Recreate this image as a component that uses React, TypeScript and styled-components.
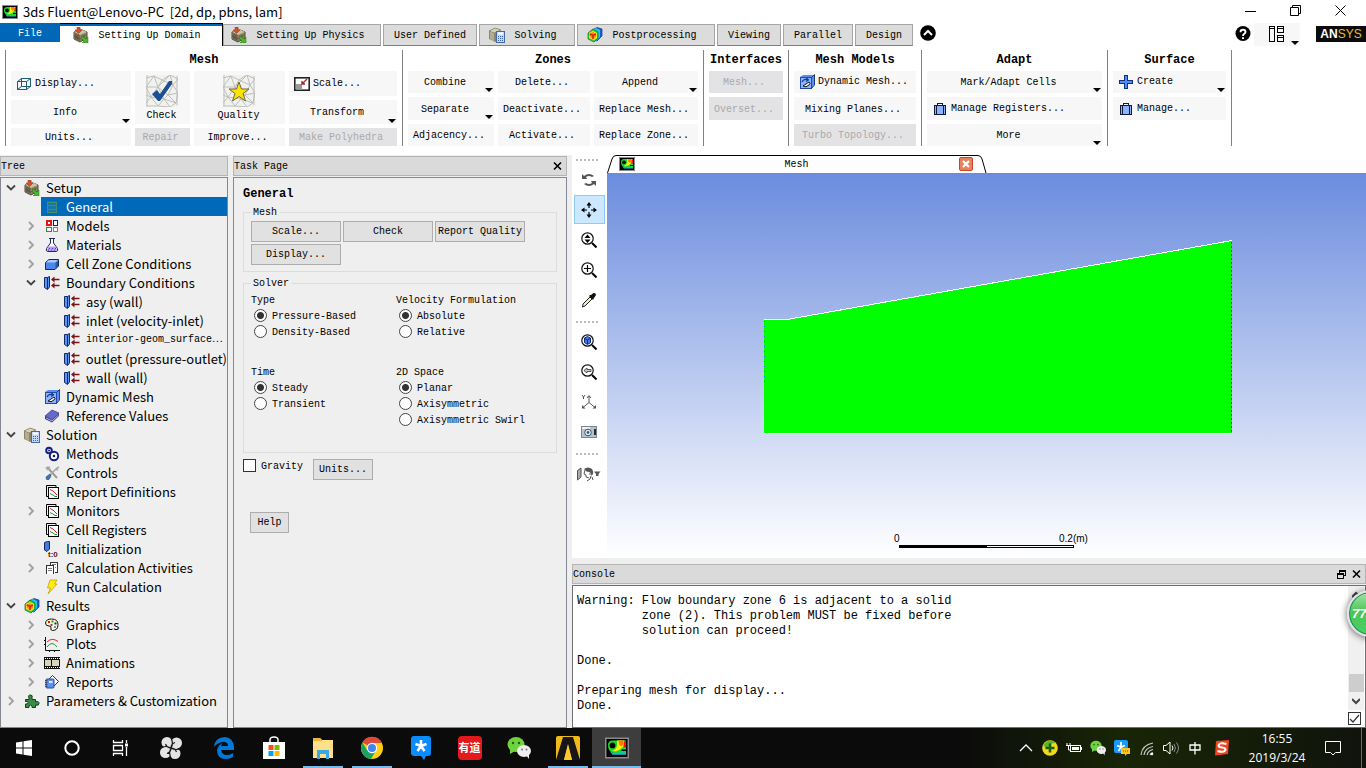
import React from "react";
import styled, { createGlobalStyle, css } from "styled-components";

const mono = `"Liberation Mono", "Noto Sans CJK SC", monospace`;
const sans = `"Noto Sans CJK SC", "Open Sans", sans-serif`;

const GlobalStyle = createGlobalStyle`
  * { box-sizing: border-box; }
  body { margin: 0; background: #efefef; color: #000; font: 10px/16px ${mono}; }
  button, input { font: inherit; color: inherit; margin: 0; padding: 0; }
  button { border: 0; background: none; }
  svg { display: block; flex: none; }
  ul { list-style: none; margin: 0; padding: 0; }
`;

/* ---------- icons ---------- */

type IconProps = { size?: number };

const Svg = ({ size = 16, box = 16, crisp = false, children }: {
  size?: number; box?: number; crisp?: boolean; children: React.ReactNode;
}) => (
  <svg width={size} height={size} viewBox={`0 0 ${box} ${box}`} fill="none" aria-hidden="true"
    shapeRendering={crisp ? "crispEdges" : undefined}>
    {children}
  </svg>
);

const FluentIcon = ({ size = 16 }: IconProps) => (
  <Svg size={size}>
    <rect x="0.5" y="1.5" width="15" height="13" fill="#000" stroke="#8a8a8a" />
    <path d="M2 6Q2 3 5 3H14V9H11V10H14V11.500Q9 13 5 11Q2 10 2 6Z" fill="#19d92b" />
    <path d="M3 10Q6 12 9 11H14V12.500H5Z" fill="#13b9e6" />
    <path d="M8 3H13V5Q12 8 9 9.500Q6 11 5 9.500Q8 9 8 6Z" fill="#fff000" />
    <path d="M9 3H12Q13 5 11 7L9.500 6Z" fill="#ff7a00" />
    <path d="M12.500 3.500H14V7.500H12.500Z" fill="#e11" />
    <circle cx="5" cy="6.300" r="1.900" fill="#000" />
  </Svg>
);

const SetupIcon = ({ size = 16 }: IconProps) => (
  <Svg size={size}>
    <path d="M1 5L7 2L14 5V11L7 15L1 12Z" fill="#8f866b" stroke="#4e4735" />
    <path d="M1 5L7 8L14 5L8 2Z" fill="#c9c0a2" />
    <path d="M7 8V15L1 12V5Z" fill="#766d53" />
    <path d="M3 7V12M5 8V13M9 8V13M11 7V12M1 9L7 12L13 8" stroke="#4e4735" strokeWidth=".6" />
    <path d="M4 0H7V3H9L5.500 6.500L2 3H4Z" fill="#d4512b" stroke="#86311b" strokeWidth=".5" />
    <path d="M9 9L13 12L15 10V16H9L11 14L8 11Z" fill="#4eb52c" stroke="#257012" strokeWidth=".5" />
  </Svg>
);

const SolutionIcon = ({ size = 16 }: IconProps) => (
  <Svg size={size}>
    <path d="M0 4L6 1L11 2.500V13L6 15L0 12Z" fill="#8c8569" />
    <path d="M0 4L6 1L12 3L5 6Z" fill="#d6d0b5" stroke="#7b7458" strokeWidth=".6" />
    <path d="M2 5V12.500M4 6V14" stroke="#d9d3b9" />
    <rect x="7.500" y="4.500" width="8" height="11" fill="#c5d8f8" stroke="#4568a6" />
    <path d="M9 6.500H14" stroke="#fff" strokeWidth="2" />
    <path d="M9 9.500H14M9 11.500H14M9 13.500H14" stroke="#3c64b2" strokeDasharray="1 1" />
  </Svg>
);

const ResultsIcon = ({ size = 16 }: IconProps) => (
  <Svg size={size}>
    <path d="M5 3L10 .5L15 2V9L10 14L5 13Z" fill="#2058dd" stroke="#173a80" strokeWidth=".7" />
    <path d="M4 4L9 1L13 3V10L9 14Z" fill="#17cfe0" />
    <path d="M1 6L6 2L11 5V11L7 15L1 12Z" fill="#38cf2f" stroke="#176d20" strokeWidth=".7" />
    <path d="M2 6L6 4L10 6V11L7 13L2 11Z" fill="#ffe71b" />
    <path d="M2 7L6 5L9 7V10L6 12L3 10Z" fill="#ff8a19" />
    <path d="M3 7L6 8.500L9 7M6 8V12" stroke="#d9240b" strokeWidth="1.500" />
  </Svg>
);

const WireCubeIcon = () => (
  <Svg>
    <path d="M1.500 5.500H10.500V13.500H1.500ZM5.500 2.500H14.500V10.500H5.500ZM1.500 5.500L5.500 2.500M10.500 5.500L14.500 2.500M10.500 13.500L14.500 10.500M1.500 13.500L5.500 10.500" stroke="#1d5a74" />
  </Svg>
);

const ScaleIcon = () => (
  <Svg>
    <rect x=".8" y="1.800" width="14.400" height="12.400" fill="#fff" stroke="#222" strokeWidth="1.600" />
    <rect x="2" y="8" width="6" height="5.500" fill="#999" />
    <path d="M13 3L8 8M8 5V8H11" stroke="#a8262b" strokeWidth="1.400" />
  </Svg>
);

const MeshBackdrop = () => (
  <>
    <rect width="32" height="32" fill="#f1f1ef" />
    <path d="M0 3L8 1L16 5L24 0L32 4M0 12L8 1L12 12L24 0L27 10L32 4M0 12L12 12L16 5L27 10L32 18L22 20L12 12L5 22L0 12M0 28L5 22L12 31L18 24L5 22M12 12L18 24L22 20L27 10M22 20L30 28L18 24L24 32M32 18L30 28M0 31L12 31L24 32L30 28M1 0V31M31 1V30M0 20L5 22" stroke="#bfbfba" />
  </>
);

const CheckIcon = () => (
  <Svg size={32} box={32}>
    <MeshBackdrop />
    <path d="M6 19L11 15L14 19L23 6H26V9L14 26H12Z" fill="#1c4f94" />
  </Svg>
);

const QualityIcon = () => (
  <Svg size={32} box={32}>
    <MeshBackdrop />
    <path d="M16 7L18.500 14H26L20 18.500L22.500 26L16 21.500L9.500 26L12 18.500L6 14H13.500Z" fill="#ffe300" stroke="#6b6740" />
  </Svg>
);

const DynamicMeshIcon = () => (
  <Svg>
    <path d="M1 3L4 1H15V11L13 14H1Z" fill="#5b8cf0" />
    <rect x="1.500" y="3.500" width="11" height="11" fill="#8db3ff" stroke="#1f4ba6" />
    <path d="M12.500 3.500L15.500 .5V11L12.500 14.500" stroke="#1f3d80" />
    <path d="M3 8Q5 4 9 6M7.500 4L9.500 6L7 7.500" stroke="#123a8c" strokeWidth="1.200" />
    <path d="M4 12L10 8Q12 9 10 11Q7 14 4 12Z" fill="#fff" stroke="#111" />
  </Svg>
);

const CaseIcon = () => (
  <Svg crisp>
    <path d="M5.500 4V2.500H10.500V4" stroke="#111a3c" />
    <rect x="2.500" y="4.500" width="11" height="9" fill="#8fb2ff" stroke="#111a3c" />
    <path d="M4.500 5V13M11.500 5V13" stroke="#111a3c" />
  </Svg>
);

const PlusIcon = () => (
  <Svg crisp>
    <path d="M6.500 1.500H9.500V6.500H14.500V9.500H9.500V14.500H6.500V9.500H1.500V6.500H6.500Z" fill="#4d8dff" stroke="#123177" />
  </Svg>
);

const GeneralIcon = () => (
  <Svg crisp>
    <path d="M3 2H13V14H3Z" fill="#1977a6" />
    <path d="M3 3H13M3 6.500H13M3 10H13M3 13.500H13M3.500 3V14M12.500 3V14" stroke="#40906e" />
  </Svg>
);

const ModelsIcon = () => (
  <Svg crisp>
    <rect x="3" y="3" width="4" height="4" stroke="#e11" strokeWidth="2" fill="#fff" />
    <rect x="9.500" y="2.500" width="4" height="5" stroke="#102080" fill="#fff" />
    <rect x="2.500" y="9.500" width="5" height="4" stroke="#2e8c46" fill="#fff" />
    <rect x="9.500" y="9.500" width="4" height="4" stroke="#4b86f5" fill="#fff" />
  </Svg>
);

const FlaskIcon = () => (
  <Svg>
    <path d="M6.500 1.500V6L2.500 11.500Q1.500 14.500 4 14.500H12Q14.500 14.500 13.500 11.500L9.500 6V1.500M5 1.500H11" fill="#fff" stroke="#222753" />
    <path d="M4.500 9.500H11.500L13 12.500Q13 14 12 14H4Q3 14 3 12.500Z" fill="#b5a0f2" />
    <path d="M5 11.500H12M4 13H12" stroke="#5a38bf" strokeDasharray="1 2" />
  </Svg>
);

const BrickIcon = () => (
  <Svg>
    <path d="M1.500 6.500L5 3.500H14.500V10L11 13.500H1.500Z" fill="#4c86e8" stroke="#152855" />
    <path d="M2 6.500L5 4H14L11 6.500Z" fill="#a6c8ff" />
    <path d="M11.500 7V13L14 10V5Z" fill="#2657ad" />
  </Svg>
);

const BoundaryIcon = () => (
  <Svg>
    <path d="M.5 2.500H3.500L5.500 1.500V12L3.500 14.500L.5 12.500Z" fill="#5d93f2" stroke="#142a63" />
    <path d="M3.500 2.500V14" stroke="#142a63" />
    <path d="M9 4.500H15.500M9 10.500H15.500" stroke="#7a1418" strokeWidth="1.400" />
    <path d="M7 4.500L10.500 1.500V7.500ZM7 10.500L10.500 7.500V13.500Z" fill="#7a1418" />
  </Svg>
);

const BookIcon = () => (
  <Svg>
    <path d="M1 8L8 2L15 5L8 12Z" fill="#6868c9" stroke="#37378d" strokeWidth=".7" />
    <path d="M1 8L8 12L15 5V8L8 14.500L1 11Z" fill="#35358a" />
    <path d="M2 10L8 13L14.500 7" stroke="#dcdcf0" strokeWidth=".8" />
  </Svg>
);

const GearsIcon = () => (
  <Svg>
    <circle cx="5" cy="4.500" r="2.800" fill="#fff" stroke="#171f80" strokeWidth="2" />
    <circle cx="5" cy="4.500" r="1" fill="#171f80" />
    <circle cx="10" cy="10" r="4.200" fill="#fff" stroke="#171f80" strokeWidth="2" />
    <circle cx="10" cy="10" r="1.300" fill="#171f80" />
  </Svg>
);

const ToolsIcon = () => (
  <Svg>
    <path d="M3 2L13 13" stroke="#9a9a9a" strokeWidth="2" />
    <path d="M1.500 2L3 5L6 4L5 1" stroke="#b0b0b0" />
    <path d="M13 3L6 10M15 2L12 4M14 5L11 4" stroke="#a8a8a8" strokeWidth="1.600" />
    <path d="M2 12L6 9L7 11L5 14.500H2.500Z" fill="#3e76b5" stroke="#28466d" strokeWidth=".6" />
  </Svg>
);

const ReportIcon = () => (
  <Svg>
    <path d="M12 3V1.500H2.500V12.500H4" stroke="#000" />
    <rect x="4.500" y="3.500" width="10" height="11" fill="#fff" stroke="#000" />
    <path d="M6 5.500L9 7L13 11" stroke="#e01c24" />
    <path d="M6 9.500L9 11L11 12.500H13" stroke="#189a3a" />
  </Svg>
);

const InitIcon = () => (
  <Svg>
    <path d="M.5 1.500L3.500 .5H5.500V8L3 10.500L.5 9Z" fill="#4579de" stroke="#142a63" />
    <text x="4" y="15.500" fontFamily="Liberation Sans" fontWeight="bold" fontSize="8" fill="#6b1417">t:0</text>
  </Svg>
);

const PagesIcon = () => (
  <Svg crisp>
    <path d="M6.500 9V2.500H13.500V12.500H11" fill="#fff" stroke="#333" />
    <path d="M2.500 14V5.500H9.500V13.500" fill="#fff" stroke="#333" />
    <path d="M4 8.500H8M4 10.500H8M8 4.500H12M11 7.500H12" stroke="#777" />
  </Svg>
);

const BoltIcon = () => (
  <Svg>
    <path d="M6 1H13L10.500 5H13L4 15L6.500 9H3.500Z" fill="#ffec10" stroke="#c7a100" strokeWidth=".8" />
  </Svg>
);

const PaletteIcon = () => (
  <Svg>
    <path d="M1.500 6Q2 2 7.500 2Q14 2 14 7.500Q14 13.500 8.500 13.500Q6 13 7 11Q7.500 9 5 9Q1.500 9 1.500 6Z" fill="#fff7c9" stroke="#111" />
    <rect x="4" y="4" width="2" height="2" fill="#e11" /><rect x="7.500" y="3.500" width="2" height="2" fill="#1c9c34" />
    <rect x="10.500" y="5.500" width="2" height="2" fill="#111a80" /><rect x="10" y="9" width="2" height="2" fill="#16b9cc" />
    <rect x="6.500" y="7" width="2" height="2" fill="#b01cb0" />
  </Svg>
);

const PlotIcon = () => (
  <Svg>
    <path d="M1.500 1V14.500H16M0 4.500H2M0 8.500H2M5.500 14V16M10.500 14V16" stroke="#111" />
    <path d="M3 6Q8 1 14 5.500" stroke="#e02020" /><path d="M3 11Q8 4 13 11" stroke="#1d9a3c" />
  </Svg>
);

const FilmIcon = () => (
  <Svg crisp>
    <rect y="2" width="16" height="12" fill="#111" />
    <path d="M1 3.500H16M1 12.500H16" stroke="#fff" strokeDasharray="1 1" />
    <rect x="1" y="5" width="6" height="6" fill="#d8d5bd" /><rect x="8" y="5" width="7" height="6" fill="#d8d5bd" />
  </Svg>
);

const ReportsIcon = () => (
  <Svg>
    <path d="M4 6L8.500 1.500L14.500 7.500L10 12" fill="#fff" stroke="#333" />
    <rect x="2" y="5" width="8" height="9" rx="1" fill="#5d93ee" stroke="#264f9e" />
    <path d="M1 6.500H3.500M1 8.500H3.500M1 10.500H3.500M1 12.500H3.500" stroke="#263c70" strokeWidth=".8" />
    <rect x="5" y="7" width="3.500" height="2" fill="#dbe8ff" />
  </Svg>
);

const PuzzleIcon = () => (
  <Svg>
    <path d="M1.500 6.500H5V5Q3.500 2 6.500 2Q9 2 8 5V6.500H11.500V9Q15 7.500 15 10.500Q15 13 11.500 12V14.500H8Q8.500 12 6.500 12Q4.500 12 5 14.500H1.500V11Q4 11.500 4 9.500Q4 8 1.500 8.500Z" fill="#3b8c48" stroke="#133f1c" />
  </Svg>
);

/* ---------- title bar and ribbon ---------- */

const Page = styled.div`
  display: flex;
  flex-direction: column;
  min-height: 100vh;
`;

const TitleBar = styled.header`
  display: flex;
  align-items: center;
  gap: 5px;
  height: 23px;
  padding-left: 2px;
  background: #fff;
  font: 13px/22px ${sans};
  white-space: pre;
`;

const WindowButtons = styled.div`
  display: flex;
  margin: 0 3px 2px auto;
`;

const WindowButton = styled.button`
  width: 45px;
  height: 20px;
  display: grid;
  place-items: center;
`;

const TabStrip = styled.nav`
  display: flex;
  align-items: flex-start;
  gap: 2px;
  height: 23px;
  background: #fff;
`;

const FileTab = styled.button`
  width: 60px;
  height: 19px;
  padding-top: 2px;
  margin-right: -2px;
  background: #0067b8;
  color: #fff;
`;

const Tab = styled.button<{ $w: number; $icon?: boolean; $active?: boolean }>`
  display: flex;
  align-items: center;
  justify-content: center;
  gap: 9px;
  width: ${(p) => p.$w}px;
  height: 22px;
  margin-top: 1px;
  padding: 2px ${(p) => (p.$icon ? 8 : 0)}px 0 0;
  border: 1px solid #a6a6a6;
  border-bottom-color: #808080;
  background: #dcdcdc;
  svg { margin-bottom: 2px; }
  ${(p) => p.$active && css`
    height: 23px;
    margin: 0 -2px 0 0;
    border: solid #000;
    border-width: 0 1px 0 0;
    box-shadow: inset 0 1px #000, inset 0 3px #0067b8;
    background: #fff;
  `}
`;

const StripEnd = styled.div`
  display: flex;
  align-items: flex-start;
  margin-left: auto;
`;

const RoundButton = styled.button`
  margin: 2px 0 0 5px;
`;

const LayoutButton = styled.button`
  position: relative;
  width: 46px;
  height: 23px;
  padding: 0 0 2px 14px;
  margin: 0 16px 0 3px;
  background: #f7f7f7;
`;

const AnsysLogo = styled.a`
  display: block;
  width: 50px;
  height: 16px;
  margin-top: 3px;
  background: #0b0b0b;
  color: #fff;
  font: bold 12px/16px "Liberation Sans", sans-serif;
  text-align: center;
  text-decoration: none;
  span { color: #e9b83b; font-weight: normal; }
`;

const Ribbon = styled.section`
  display: flex;
  padding: 4px 0 9px 5px;
  background: #fff;
`;

const Group = styled.section`
  padding: 0 5px;
  border-right: 1px solid #808080;
  &:first-child { border-left: 1px solid #808080; }
`;

const GroupTitle = styled.h2`
  height: 21px;
  margin: 0;
  font: bold 12px/21px ${mono};
  text-align: center;
`;

const GroupGrid = styled.div<{ $cols: string; $rows?: string }>`
  display: grid;
  gap: 4px;
  grid-template-columns: ${(p) => p.$cols};
  grid-template-rows: ${(p) => p.$rows ?? "22px 23px 22px"};
  grid-auto-flow: column;
`;

const RibbonButton = styled.button<{ $icon?: boolean; $menu?: boolean; $tall?: boolean }>`
  position: relative;
  display: flex;
  align-items: center;
  justify-content: ${(p) => (p.$icon ? "flex-start" : "center")};
  gap: 3px;
  padding: ${(p) => (p.$icon ? "0" : "2px")} ${(p) => (p.$menu ? "12px" : "4px")} 0 ${(p) => (p.$icon ? "5px" : "0")};
  background: #f7f7f7;
  white-space: nowrap;
  ${(p) => p.$tall && css`
    grid-row: span 2;
    flex-direction: column;
    justify-content: flex-start;
    gap: 1px;
    padding: 4px 2px 0 0;
  `}
  &:disabled { background: #e3e3e5; color: #a9a9a9; }
`;

const MenuMark = styled.span`
  position: absolute;
  right: 1px;
  bottom: 1px;
  border: solid transparent;
  border-width: 4px 4px 0;
  border-top-color: #000;
`;

type Action = { label: string; icon?: React.ReactNode; menu?: boolean; tall?: boolean; off?: boolean };

const groups: { title: string; cols: string; rows?: string; actions: Action[] }[] = [
  {
    title: "Mesh", cols: "120px 55px 91px 108px", rows: "25px 24px 18px",
    actions: [
      { label: "Display...", icon: <WireCubeIcon /> }, { label: "Info", menu: true }, { label: "Units..." },
      { label: "Check", icon: <CheckIcon />, tall: true }, { label: "Repair", off: true },
      { label: "Quality", icon: <QualityIcon />, tall: true }, { label: "Improve..." },
      { label: "Scale...", icon: <ScaleIcon /> }, { label: "Transform", menu: true }, { label: "Make Polyhedra", off: true },
    ],
  },
  {
    title: "Zones", cols: "86px 92px 104px",
    actions: [
      { label: "Combine", menu: true }, { label: "Separate", menu: true }, { label: "Adjacency..." },
      { label: "Delete..." }, { label: "Deactivate..." }, { label: "Activate..." },
      { label: "Append", menu: true }, { label: "Replace Mesh..." }, { label: "Replace Zone..." },
    ],
  },
  { title: "Interfaces", cols: "74px", actions: [{ label: "Mesh...", off: true }, { label: "Overset...", off: true }] },
  {
    title: "Mesh Models", cols: "122px",
    actions: [
      { label: "Dynamic Mesh...", icon: <DynamicMeshIcon /> }, { label: "Mixing Planes..." },
      { label: "Turbo Topology...", off: true },
    ],
  },
  {
    title: "Adapt", cols: "175px",
    actions: [
      { label: "Mark/Adapt Cells", menu: true }, { label: "Manage Registers...", icon: <CaseIcon /> },
      { label: "More", menu: true },
    ],
  },
  {
    title: "Surface", cols: "113px",
    actions: [{ label: "Create", icon: <PlusIcon />, menu: true }, { label: "Manage...", icon: <CaseIcon /> }],
  },
];

/* ---------- panels ---------- */

const Workspace = styled.main`
  display: flex;
  flex: 1;
  gap: 5px;
`;

const Panel = styled.section<{ $w?: number }>`
  display: flex;
  flex-direction: column;
  ${(p) => p.$w ? css`flex: none; width: ${p.$w}px; padding-top: 1px;` : ""}
`;

const PanelHeader = styled.header`
  display: flex;
  align-items: center;
  gap: 6px;
  height: 20px;
  margin-bottom: 1px;
  padding: 0 3px 0 0;
  border: 1px solid #b4b4b4;
  background: #dadada;
  h2 { flex: 1; margin: 0; padding-top: 2px; font: inherit; }
`;

const PanelBody = styled.div`
  position: relative;
  flex: 1;
  border: 1px solid #828790;
  background: #efefef;
`;

const TreeRow = styled.li<{ $level: number }>`
  display: flex;
  align-items: center;
  height: 19px;
  padding-left: ${(p) => p.$level * 20}px;
`;

const Expander = styled.span`
  display: grid;
  place-items: center;
  width: 19px;
  height: 19px;
  margin-right: 1px;
`;

const TreeLabel = styled.a<{ $selected?: boolean; $mono?: boolean }>`
  display: flex;
  align-items: center;
  flex: 1;
  gap: 6px;
  height: 19px;
  padding-left: 3px;
  font: ${(p) => (p.$mono ? `10px/19px ${mono}` : `13px/19px ${sans}`)};
  color: ${(p) => (p.$selected ? "#fff" : "#000")};
  background: ${(p) => (p.$selected ? "#0069b9" : "transparent")};
  text-decoration: none;
  white-space: nowrap;
`;

type Node = [level: number, state: "" | "open" | "shut", label: string, icon: React.ReactNode];

const tree: Node[] = [
  [0, "open", "Setup", <SetupIcon />],
  [1, "", "General", <GeneralIcon />],
  [1, "shut", "Models", <ModelsIcon />],
  [1, "shut", "Materials", <FlaskIcon />],
  [1, "shut", "Cell Zone Conditions", <BrickIcon />],
  [1, "open", "Boundary Conditions", <BoundaryIcon />],
  [2, "", "asy (wall)", <BoundaryIcon />],
  [2, "", "inlet (velocity-inlet)", <BoundaryIcon />],
  [2, "", "interior-geom_surface⋯", <BoundaryIcon />],
  [2, "", "outlet (pressure-outlet)", <BoundaryIcon />],
  [2, "", "wall (wall)", <BoundaryIcon />],
  [1, "", "Dynamic Mesh", <DynamicMeshIcon />],
  [1, "", "Reference Values", <BookIcon />],
  [0, "open", "Solution", <SolutionIcon />],
  [1, "", "Methods", <GearsIcon />],
  [1, "", "Controls", <ToolsIcon />],
  [1, "", "Report Definitions", <ReportIcon />],
  [1, "shut", "Monitors", <ReportIcon />],
  [1, "", "Cell Registers", <ReportIcon />],
  [1, "", "Initialization", <InitIcon />],
  [1, "shut", "Calculation Activities", <PagesIcon />],
  [1, "", "Run Calculation", <BoltIcon />],
  [0, "open", "Results", <ResultsIcon />],
  [1, "shut", "Graphics", <PaletteIcon />],
  [1, "shut", "Plots", <PlotIcon />],
  [1, "shut", "Animations", <FilmIcon />],
  [1, "shut", "Reports", <ReportsIcon />],
  [0, "shut", "Parameters & Customization", <PuzzleIcon />],
];

const TaskBody = styled(PanelBody)`
  padding: 8px 9px;
  h3 { margin: 0 0 4px; font: bold 12px/16px ${mono}; }
`;

const GroupBox = styled.fieldset`
  min-width: 0;
  margin: 0 0 5px;
  padding: 3px 7px 6px;
  border: 1px solid #dcdcdc;
  legend { height: 12px; padding: 0 3px 0 2px; line-height: 14px; }
`;

const ButtonWrap = styled.div`
  display: flex;
  flex-wrap: wrap;
  gap: 2px;
`;

const PushButton = styled.button<{ $w: number }>`
  width: ${(p) => p.$w}px;
  height: 21px;
  border: 1px solid #adadad;
  background: #e1e1e1;
  white-space: nowrap;
`;

const SolverGrid = styled.div`
  display: grid;
  grid-template-columns: 145px 1fr;
  row-gap: 24px;
  padding-bottom: 18px;
`;

const RadioGroup = styled.div`
  min-height: 48px;
  line-height: 18px;
  label { display: flex; align-items: flex-start; gap: 5px; height: 16px; padding-left: 3px; }
`;

const RadioTitle = styled.div`
  height: 16px;
`;

const Radio = styled.input`
  appearance: none;
  width: 13px;
  height: 13px;
  margin-top: 1px;
  border: 1px solid #444;
  border-radius: 50%;
  background: #fff;
  &:checked { background: radial-gradient(circle, #333 0 3px, #fff 4px); }
`;

const CheckBox = styled.input`
  appearance: none;
  display: block;
  width: 13px;
  height: 13px;
  border: 1px solid #333;
  background: #fff;
`;

const TaskFooter = styled.div`
  display: flex;
  align-items: flex-start;
  gap: 9px;
  margin: 6px 0 32px;
  label { display: flex; align-items: flex-start; gap: 5px; width: 61px; height: 14px; }
`;

const HelpRow = styled.div`
  padding-left: 7px;
`;

const RadioSet = ({ title, name, options }: { title: string; name: string; options: string[] }) => (
  <RadioGroup role="radiogroup" aria-label={title}>
    <RadioTitle>{title}</RadioTitle>
    {options.map((o, i) => (
      <label key={o}><Radio type="radio" name={name} defaultChecked={i === 0} />{o}</label>
    ))}
  </RadioGroup>
);

/* ---------- viewer ---------- */

const RightColumn = styled.div`
  display: flex;
  flex: 1;
  flex-direction: column;
  min-width: 0;
`;

const Viewer = styled.section`
  display: flex;
  flex: 1;
  margin-bottom: 6px;
  background: #fff;
`;

const ViewTools = styled.div`
  display: flex;
  flex-direction: column;
  flex: none;
  width: 35px;
  padding: 4px 2px 0;
`;

const ToolButton = styled.button<{ $on?: boolean }>`
  display: grid;
  place-items: center;
  width: 31px;
  height: 29px;
  margin-top: 1px;
  padding-right: 1px;
  border: 1px solid ${(p) => (p.$on ? "#8fcaf5" : "transparent")};
  background: ${(p) => (p.$on ? "#cce8ff" : "transparent")};
`;

const Grip = styled.span`
  height: 2px;
  margin: 0 5px 3px 2px;
  background: repeating-linear-gradient(90deg, #bbb 0 2px, transparent 2px 4px);
  &:not(:first-child) { margin-top: 7px; }
`;

const Canvas = styled.div`
  display: flex;
  flex: 1;
  flex-direction: column;
  min-width: 0;
`;

const ViewTab = styled.div`
  display: flex;
  align-items: center;
  position: relative;
  width: 380px;
  height: 18px;
  padding: 0 13px 0 12px;
  h2 { flex: 1; margin: 0; padding-top: 2px; font: inherit; text-align: center; }
`;

const TabOutline = styled.svg`
  position: absolute;
  inset: 0;
`;

const Scene = styled.div`
  display: flex;
  flex: 1;
  align-items: center;
  justify-content: center;
  background: linear-gradient(#6b8cde, #fff);
  svg { width: 100%; height: auto; }
`;

const Lens = ({ children }: { children: React.ReactNode }) => (
  <Svg>
    <circle cx="6.500" cy="6.500" r="5.700" fill="#fff" stroke="#111" strokeWidth="1.200" />
    <path d="M11 11L15.500 15.500" stroke="#000" strokeWidth="2" />
    {children}
  </Svg>
);

const viewTools: (React.ReactNode | null)[] = [
  null,
  <Svg><path d="M1 7V2L3 4Q8 0 13 4L11 5Q8 3 5 5L6 7ZM15 9V14L13 12Q8 16 3 12L5 11Q8 13 11 11L10 9Z" fill="#555" /></Svg>,
  <Svg><path d="M8 2V6M8 10V14M2 8H6M10 8H14" stroke="#000" strokeWidth="1.200" /><path d="M8 0L10.500 3.500H5.500ZM8 16L10.500 12.500H5.500ZM0 8L3.500 5.500V10.500ZM16 8L12.500 5.500V10.500Z" fill="#000" /></Svg>,
  <Lens><path d="M3.500 6L6.500 2.500L9.500 6ZM3.500 7.500L6.500 11L9.500 7.500Z" fill="#000" /></Lens>,
  <Lens><path d="M3 6.500H10M6.500 3V10" stroke="#000" strokeWidth="1.200" /></Lens>,
  <Svg><path d="M9 5L11 7L4 14L1.500 15L2 12Z" fill="#eee9c9" stroke="#222" /><path d="M8 4L12 8L13 6L15 3Q15 1 13 1Q12 1 10 3L9 3Z" fill="#111" /></Svg>,
  null,
  <Lens><path d="M3.500 4L6.500 2.500L9.500 4V8.500L6.500 10.500L3.500 8.500Z" fill="#4779ef" stroke="#102c78" /><path d="M4 4.500L6.500 6L9 4.500M6.500 6V10" stroke="#102c78" /></Lens>,
  <Lens><path d="M3 6.500L6 4V5.500H10V7.500H6V9Z" fill="#ccc" stroke="#333" strokeWidth=".8" /></Lens>,
  <Svg><path d="M8 8.500V2M8 8.500L2 13.500M8 8.500L14 13.500M6 4L8 1.500L10 4" stroke="#555" /><path d="M1 14.500V11L4.500 14.500ZM15 14.500V11L11.500 14.500Z" fill="#555" /><path d="M1 1L2.500 3L4 1M2.500 3V5" stroke="#555" /></Svg>,
  <Svg><rect x=".5" y="2.500" width="15" height="11" fill="#b5c3cf" stroke="#7a858e" /><rect x="1" y="3" width="8" height="2" fill="#eef3f6" /><circle cx="7" cy="8.500" r="3.300" fill="#eef4fa" stroke="#3b4c5b" /><circle cx="7" cy="8.500" r="1.400" fill="#225e9c" /><rect x="13" y="5" width="2" height="6" fill="#202a33" /></Svg>,
  null,
  <svg width="24" height="16" viewBox="0 0 24 16" fill="none" aria-hidden="true">
    <path d="M.5 4.500L4 2V11L.5 14Z" fill="#aaa" stroke="#555" />
    <path d="M7 3Q11 0 15 3Q18 8 14 10Q15 7 12 6Q9 6 8 4Z" fill="#555" />
    <path d="M8 4L7 8L9 9L9 11L12 12M14 10L13 13L10 15M12 8L14 8M15 11L16 14" stroke="#555" />
    <path d="M17 5.500H23.500L21.500 8V10H19V8Z" fill="#555" />
  </svg>,
];

/* ---------- console ---------- */

const ConsolePanel = styled(Panel)`
  position: relative;
  overflow: hidden;
`;

const ConsoleBody = styled(PanelBody)`
  display: flex;
  background: #fff;
  border-color: #6f6f6f;
  pre { flex: 1; margin: 0; padding: 8px 4px 13px; font: 12px/15px ${mono}; }
`;

const ScrollColumn = styled.div`
  display: flex;
  flex-direction: column;
  width: 17px;
`;

const ScrollTrack = styled.div`
  display: flex;
  flex: 1;
  flex-direction: column;
  align-items: center;
  justify-content: space-between;
  width: 16px;
  margin-bottom: 2px;
  padding: 5px 0;
  background: #f0f0f0;
`;

const ScrollThumb = styled.div`
  width: 15px;
  height: 18px;
  margin: auto 0 5px;
  background: #cdcdcd;
`;

const AlertBall = styled.button`
  position: absolute;
  right: -28px;
  top: 26px;
  width: 47px;
  height: 47px;
  padding-left: 3px;
  border: 2px solid #e2e2e6;
  border-radius: 50%;
  box-shadow: 0 1px 6px 1px #0007, inset 0 0 0 1px #128a5a;
  background: linear-gradient(#a5e6a8, #4cc557 45%, #46d163);
  color: #fff;
  font: italic bold 13px/40px "Liberation Sans", sans-serif;
  text-align: left;
`;

const TickedBox = styled.span`
  position: relative;
  padding-bottom: 2px;
  svg { position: absolute; left: 1px; top: 1px; pointer-events: none; }
`;

/* ---------- task bar ---------- */

const TaskBar = styled.footer`
  display: flex;
  height: 40px;
  background: linear-gradient(90deg, #0b0b0b 70%, #182506 82%, #151e08 90%, #10130c);
  color: #fff;
`;

const AppButton = styled.button<{ $w: number; $open?: boolean; $active?: boolean }>`
  position: relative;
  display: grid;
  place-items: center;
  width: ${(p) => p.$w}px;
  background: ${(p) => (p.$active ? "#3d3d3d" : "transparent")};
  ${(p) => p.$open && css`
    &::after {
      content: "";
      position: absolute;
      bottom: 0;
      left: ${p.$active ? 0 : 5}px;
      right: ${p.$active ? 0 : 4}px;
      height: 2px;
      background: #76b9ed;
    }
  `}
`;

const Tray = styled.div`
  display: flex;
  margin-left: auto;
  padding-right: 4px;
`;

const Clock = styled.time`
  width: 78px;
  padding-top: 1px;
  font: 12px/19px "Open Sans", sans-serif;
  text-align: center;
`;

const Notices = styled(AppButton)`
  padding-right: 11px;
  border-right: 1px solid #6a6d64;
`;

const Youdao = styled.span`
  width: 24px;
  height: 24px;
  border-radius: 4px;
  background: #e3191c;
  font: bold 11px/23px "Noto Sans CJK SC", sans-serif;
`;

const WeChat = ({ size = 24 }: IconProps) => (
  <Svg size={size} box={24}>
    <ellipse cx="9" cy="8.500" rx="8.500" ry="7.500" fill="#6fd33d" /><path d="M3 13L3 18L8 15Z" fill="#6fd33d" />
    <ellipse cx="17" cy="15" rx="7" ry="6" fill="#eee" /><path d="M19 19L22 23L22 17Z" fill="#eee" />
    <circle cx="6" cy="7" r="1.200" fill="#25600f" /><circle cx="12" cy="7" r="1.200" fill="#25600f" />
    <circle cx="15" cy="13.500" r="1" fill="#777" /><circle cx="19.500" cy="13.500" r="1" fill="#777" />
  </Svg>
);

const apps: { name: string; w: number; open?: boolean; active?: boolean; icon: React.ReactNode }[] = [
  { name: "Start", w: 48, icon: <Svg><path d="M0 2.500L6.500 1.500V7.500H0ZM7.500 1.300L16 0V7.500H7.500ZM0 8.500H6.500V14.500L0 13.500ZM7.500 8.500H16V16L7.500 14.700Z" fill="#fff" /></Svg> },
  { name: "Cortana", w: 48, icon: <Svg><circle cx="8" cy="8" r="6.700" stroke="#fff" strokeWidth="2" /></Svg> },
  { name: "Task View", w: 48, icon: <Svg><path d="M1.500 0V2.500H10.500V0M1.500 16V13.500H10.500V16M1.500 5.500H10.500V10.500H1.500ZM14.500 0V3M14.500 7V16" stroke="#fff" strokeWidth="1.300" /><rect x="13" y="3.500" width="3" height="3" fill="#fff" /></Svg> },
  {
    name: "Pinwheel", w: 54,
    icon: (
      <Svg size={24} box={24}>
        <g fill="#e4e4e4">
          <circle cx="8" cy="6.500" r="5.500" /><circle cx="17.500" cy="7" r="5.500" />
          <circle cx="6.500" cy="16.500" r="5.500" /><circle cx="16" cy="17.500" r="5.500" />
          <rect x="6" y="6" width="12" height="12" />
        </g>
        <path d="M12 12Q15 7 11.500 1M12 12Q17 15 23 12M12 12Q9 17 12.500 23M12 12Q7 9 1 12M12 12Q8 12 6.500 8M12 12Q12 8 16 6.500M12 12Q16 12 17.500 16M12 12Q12 16 8 17.500" stroke="#161616" strokeWidth="1.200" />
      </Svg>
    ),
  },
  { name: "Edge", w: 51, icon: <Svg size={24} box={24}><path d="M2 11Q3 1 13 1Q22 2 22 12V14H9Q10 19 15 19Q19 19 21 17V21Q18 23 14 23Q5 23 5 14Q6 9 11 7Q9 9 9 10H16Q16 6 12 6Q6 6 2 11Z" fill="#0078d7" /></Svg> },
  { name: "Store", w: 49, icon: <Svg size={24} box={24}><path d="M8 7V4Q8 1 12 1Q16 1 16 4V7" stroke="#fff" strokeWidth="1.500" /><path d="M1 6H23V23H1Z" fill="#fff" /><path d="M6.500 9H11.500V14H6.500Z" fill="#f25022" /><path d="M12.500 9H17.500V14H12.500Z" fill="#7fba00" /><path d="M6.500 15H11.500V20H6.500Z" fill="#00a4ef" /><path d="M12.500 15H17.500V20H12.500Z" fill="#ffb900" /></Svg> },
  { name: "Explorer", w: 49, open: true, icon: <Svg size={24} box={24}><path d="M2 2H9L11 4H22V22H2Z" fill="#ffe08a" /><path d="M2 2H9L11 4V5H2Z" fill="#edb93c" /><path d="M6 14H18V23H15V18H9V23H6Z" fill="#36a9e6" /></Svg> },
  { name: "Chrome", w: 49, open: true, icon: <Svg size={24} box={24}><circle cx="12" cy="12" r="11" fill="#fcd116" /><path d="M12 12L2.500 6.500A11 11 0 0 1 22 7H12Z" fill="#dd4a3b" /><path d="M2.500 6.500A11 11 0 0 0 11 23L16 14.500L12 12L7 14Z" fill="#1ba261" /><circle cx="12" cy="12" r="5.200" fill="#fff" /><circle cx="12" cy="12" r="4" fill="#4285f4" /></Svg> },
  { name: "Star Chat", w: 49, icon: <Svg size={24} box={24}><path d="M5 0H19Q22 0 22 3V17Q22 20 19 20H17L15 24L12 20H5Q2 20 2 17V3Q2 0 5 0Z" fill="#0a8cff" /><path d="M12 4V10M12 10L17.500 8M12 10L15.500 15M12 10L8.500 15M12 10L6.500 8" stroke="#fff" strokeWidth="2.600" /></Svg> },
  { name: "Youdao", w: 49, icon: <Youdao>有道</Youdao> },
  { name: "WeChat", w: 49, icon: <WeChat /> },
  { name: "ANSYS", w: 49, open: true, icon: <Svg size={24} box={24}><rect width="24" height="24" rx="2" fill="#f2b91a" /><path d="M7 1H17L24 24H16L12 9L8 24H0Z" fill="#161616" /><path d="M12 8L16 24H8Z" fill="#ffc928" /></Svg> },
  { name: "Fluent", w: 49, open: true, active: true, icon: <FluentIcon size={24} /> },
];

const trayIcons: { name: string; w: number; icon: React.ReactNode }[] = [
  { name: "Show hidden icons", w: 24, icon: <Svg><path d="M2 11L8 5L14 11" stroke="#fff" strokeWidth="1.300" /></Svg> },
  { name: "Security", w: 24, icon: <Svg><circle cx="8" cy="8" r="7.800" fill="#f4d81f" /><path d="M1 5Q7 -3 14 3Q8 2 5 9Z" fill="#5cb52a" /><path d="M8 3.500V12.500M3.500 8H12.500" stroke="#18620f" strokeWidth="2.600" /></Svg> },
  { name: "Battery", w: 24, icon: <Svg><rect x="4.500" y="5.500" width="10" height="6" stroke="#fff" /><path d="M6 7H13V10H6ZM15 7H16V10H15Z" fill="#fff" /><path d="M1 3V5M4 3V5M0 5.500H5M2.500 6V10H4" stroke="#fff" /></Svg> },
  { name: "WeChat status", w: 24, icon: <WeChat size={16} /> },
  { name: "Chat status", w: 24, icon: <Svg><rect width="14" height="13" rx="2" fill="#189bff" /><path d="M7 2V7M7 7L11 5.500M7 7L9.500 11M7 7L4.500 11M7 7L3 5.500" stroke="#fff" strokeWidth="1.700" /><path d="M7 8H16V14H13L11 16V14H7Z" fill="#ffc51c" /><path d="M9 11H14" stroke="#885c00" strokeDasharray="1 1" /></Svg> },
  { name: "Network", w: 25, icon: <Svg><path d="M2 15Q3 5 14 3M5 15Q6 8 14 6.500M8 15Q9 10.500 14 9.500M11 15Q11.500 13 14 12.500" stroke="#c8c8c8" strokeWidth="1.200" /><circle cx="13" cy="14" r="1.300" fill="#fff" /></Svg> },
  { name: "Volume", w: 24, icon: <Svg><path d="M.5 5.500H3L7 2V14L3 10.500H.5Z" stroke="#fff" /><path d="M9 5.500Q11 8 9 10.500" stroke="#fff" /><path d="M11 4Q14 8 11 12M13.500 2.500Q17.500 8 13.500 13.500" stroke="#8a8a8a" /></Svg> },
  { name: "Input language", w: 23, icon: <Svg><path d="M3 5H13V10H3ZM8 2V14.500" stroke="#fff" strokeWidth="1.300" /></Svg> },
  { name: "Sogou", w: 32, icon: <Svg><path d="M2 1L15 0L14 14L1 15.500Z" fill="#f3451d" /><path d="M12.500 4Q5 2 4.500 5.500Q5 7.500 8 7.500Q12 8 11.500 10Q10 13 3.500 11" stroke="#fff" strokeWidth="2" /></Svg> },
];

const CloseGlyph = () => (
  <Svg size={10} box={10}><path d="M1 1.500L8 8.500M8 1.500L1 8.500" stroke="#000" strokeWidth="1.600" /></Svg>
);

const PlainButton = styled.button`
  display: grid;
  place-items: center;
`;

export default function App() {
  return (
    <Page>
      <GlobalStyle />
      <TitleBar>
        <FluentIcon />
        <span>{"3ds Fluent@Lenovo-PC  [2d, dp, pbns, lam]"}</span>
        <WindowButtons>
          <WindowButton aria-label="Minimize"><Svg size={12} box={12}><path d="M0 6.500H11" stroke="#000" /></Svg></WindowButton>
          <WindowButton aria-label="Restore"><Svg size={11} box={11}><path d="M.5 2.500H8.500V10.500H.5ZM2.500 2.500V.5H10.500V8.500H8.500" stroke="#000" /></Svg></WindowButton>
          <WindowButton aria-label="Close"><Svg size={11} box={11}><path d="M.5 .5L10.500 10.500M10.500 .5L.5 10.500" stroke="#000" /></Svg></WindowButton>
        </WindowButtons>
      </TitleBar>

      <TabStrip>
        <FileTab>File</FileTab>
        <Tab $w={163} $icon $active><SetupIcon />Setting Up Domain</Tab>
        <Tab $w={158} $icon><SetupIcon />Setting Up Physics</Tab>
        <Tab $w={94}>User Defined</Tab>
        <Tab $w={96} $icon><SolutionIcon />Solving</Tab>
        <Tab $w={138} $icon><ResultsIcon />Postprocessing</Tab>
        <Tab $w={64}>Viewing</Tab>
        <Tab $w={70}>Parallel</Tab>
        <Tab $w={58}>Design</Tab>
        <RoundButton aria-label="Collapse ribbon">
          <Svg><circle cx="8" cy="8" r="7.800" fill="#000" /><path d="M4 10L8 6L12 10" stroke="#fff" strokeWidth="2" /></Svg>
        </RoundButton>
        <StripEnd>
          <RoundButton aria-label="Help">
            <Svg>
              <circle cx="8" cy="8.500" r="7.500" fill="#000" />
              <path d="M5.500 7.200Q5.500 4.800 8 4.800Q10.500 4.800 10.500 7Q10.500 8 9 9Q8 9.700 8 11M8 12.300V14" stroke="#fff" strokeWidth="1.900" />
            </Svg>
          </RoundButton>
          <LayoutButton aria-label="Window layout">
            <Svg crisp><path d="M1.500 .5H6.500V15.500H1.500ZM1 2.500H7M9.500 .5H15.500V6.500H9.500ZM9 2.500H16M9.500 9.500H15.500V15.500H9.500ZM9 11.500H16" stroke="#000" /></Svg>
            <MenuMark />
          </LayoutButton>
          <AnsysLogo href="#ansys" aria-label="ANSYS">AN<span>SYS</span></AnsysLogo>
        </StripEnd>
      </TabStrip>

      <Ribbon>
        {groups.map((g) => (
          <Group key={g.title}>
            <GroupTitle>{g.title}</GroupTitle>
            <GroupGrid $cols={g.cols} $rows={g.rows}>
              {g.actions.map((a) => (
                <RibbonButton key={a.label} $icon={!!a.icon} $menu={a.menu} $tall={a.tall} disabled={a.off}>
                  {a.icon}{a.label}{a.menu && <MenuMark />}
                </RibbonButton>
              ))}
            </GroupGrid>
          </Group>
        ))}
      </Ribbon>

      <Workspace>
        <Panel $w={228}>
          <PanelHeader><h2>Tree</h2></PanelHeader>
          <PanelBody>
            <ul>
              {tree.map(([level, state, label, icon]) => (
                <TreeRow key={label} $level={level}>
                  <Expander>
                    {state === "open" && <Svg size={10} box={10}><path d="M1 2.500L5 6.500L9 2.500" stroke="#444" strokeWidth="1.800" /></Svg>}
                    {state === "shut" && <Svg size={10} box={10}><path d="M3 1L7 5L3 9" stroke="#a0a0a0" strokeWidth="1.800" /></Svg>}
                  </Expander>
                  <TreeLabel href="#tree" $selected={label === "General"} $mono={label.startsWith("interior")}>
                    {icon}{label}
                  </TreeLabel>
                </TreeRow>
              ))}
            </ul>
          </PanelBody>
        </Panel>

        <Panel $w={334}>
          <PanelHeader>
            <h2>Task Page</h2>
            <PlainButton aria-label="Close task page"><CloseGlyph /></PlainButton>
          </PanelHeader>
          <TaskBody>
            <h3>General</h3>
            <GroupBox>
              <legend>Mesh</legend>
              <ButtonWrap>
                <PushButton $w={90}>Scale...</PushButton>
                <PushButton $w={90}>Check</PushButton>
                <PushButton $w={90}>Report Quality</PushButton>
                <PushButton $w={90}>Display...</PushButton>
              </ButtonWrap>
            </GroupBox>
            <GroupBox>
              <legend>Solver</legend>
              <SolverGrid>
                <RadioSet title="Type" name="type" options={["Pressure-Based", "Density-Based"]} />
                <RadioSet title="Velocity Formulation" name="velocity" options={["Absolute", "Relative"]} />
                <RadioSet title="Time" name="time" options={["Steady", "Transient"]} />
                <RadioSet title="2D Space" name="space" options={["Planar", "Axisymmetric", "Axisymmetric Swirl"]} />
              </SolverGrid>
            </GroupBox>
            <TaskFooter>
              <label><CheckBox type="checkbox" />Gravity</label>
              <PushButton $w={60}>Units...</PushButton>
            </TaskFooter>
            <HelpRow><PushButton $w={39}>Help</PushButton></HelpRow>
          </TaskBody>
        </Panel>

        <RightColumn>
          <Viewer>
            <ViewTools>
              {viewTools.map((icon, i) =>
                icon ? <ToolButton key={i} $on={i === 2}>{icon}</ToolButton> : <Grip key={i} />
              )}
            </ViewTools>
            <Canvas>
              <ViewTab>
                <TabOutline width="380" height="18" viewBox="0 0 380 18" fill="none">
                  <path d="M.5 18L5 4Q6 .5 9 .5H371Q374 .5 375 4L379 18" stroke="#000" />
                </TabOutline>
                <FluentIcon />
                <h2>Mesh</h2>
                <PlainButton aria-label="Close mesh view">
                  <Svg><rect x="1.500" y="1.500" width="13" height="13" rx="1.500" fill="#e8835e" stroke="#c9452b" /><path d="M5 5L11 11M11 5L5 11" stroke="#fff" strokeWidth="2.200" /></Svg>
                </PlainButton>
              </ViewTab>
              <Scene>
                <svg viewBox="0 0 759 385" role="img" aria-label="Mesh display">
                  <path d="M157 147H180L625 68V260H157Z" fill="#0f0" />
                  <path d="M157 146.500H180L625 67.500M157 260.500H625" stroke="#fff" fill="none" shapeRendering="crispEdges" />
                  <path d="M624.500 69V260" stroke="#087d20" strokeDasharray="2 2" fill="none" />
                  <path d="M157.500 148V210" stroke="#2a7dd0" strokeDasharray="1 4" fill="none" />
                  <path d="M292 373.500H467" stroke="#000" strokeWidth="3" />
                  <path d="M380 373.500H466" stroke="#fff" />
                  <g fontFamily="Liberation Sans" fontSize="10" fill="#000">
                    <text x="287" y="369">0</text>
                    <text x="452" y="369">0.2(m)</text>
                  </g>
                </svg>
              </Scene>
            </Canvas>
          </Viewer>

          <ConsolePanel>
            <PanelHeader>
              <h2>Console</h2>
              <PlainButton aria-label="Float console">
                <Svg size={10} box={10} crisp><path d="M1 4.500H7V9H1ZM3.500 4V1.500H9.500V6H7M3 2H10M1 5H7" stroke="#000" /></Svg>
              </PlainButton>
              <PlainButton aria-label="Close console"><CloseGlyph /></PlainButton>
            </PanelHeader>
            <ConsoleBody>
              <pre>{`Warning: Flow boundary zone 6 is adjacent to a solid
         zone (2). This problem MUST be fixed before
         solution can proceed!

Done.

Preparing mesh for display...
Done.`}</pre>
              <ScrollColumn>
                <ScrollTrack>
                  <Svg size={8} box={8}><path d="M0 6L4 2L8 6" stroke="#444" strokeWidth="2" /></Svg>
                  <ScrollThumb />
                  <Svg size={8} box={8}><path d="M0 2L4 6L8 2" stroke="#444" strokeWidth="2" /></Svg>
                </ScrollTrack>
                <TickedBox>
                  <CheckBox type="checkbox" defaultChecked aria-label="Follow output" />
                  <Svg size={11} box={11}><path d="M1 6L4 9L10 2" stroke="#333" strokeWidth="1.200" /></Svg>
                </TickedBox>
              </ScrollColumn>
            </ConsoleBody>
            <AlertBall>77</AlertBall>
          </ConsolePanel>
        </RightColumn>
      </Workspace>

      <TaskBar>
        {apps.map((a) => (
          <AppButton key={a.name} aria-label={a.name} $w={a.w} $open={a.open} $active={a.active}>{a.icon}</AppButton>
        ))}
        <Tray>
          {trayIcons.map((t) => (
            <AppButton key={t.name} aria-label={t.name} $w={t.w}>{t.icon}</AppButton>
          ))}
          <Clock>16:55<br />2019/3/24</Clock>
          <Notices $w={46} aria-label="Notifications">
            <Svg><path d="M.5 1.500H15.500V12.500H10.500L8 15L5.500 12.500H.5Z" stroke="#fff" /></Svg>
          </Notices>
        </Tray>
      </TaskBar>
    </Page>
  );
}
